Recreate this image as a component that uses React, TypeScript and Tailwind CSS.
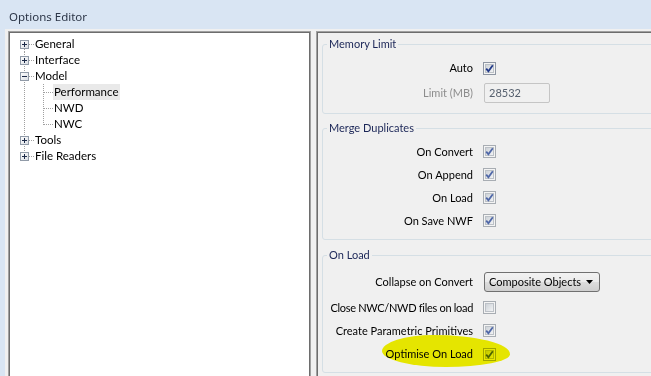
import React from 'react';

type TreeItem = {
  label: string;
  level: 0 | 1;
  box?: 'plus' | 'minus';
  first?: boolean;
  last?: boolean;
  selected?: boolean;
};

const treeItems: TreeItem[] = [
  { label: 'General', level: 0, box: 'plus', first: true },
  { label: 'Interface', level: 0, box: 'plus' },
  { label: 'Model', level: 0, box: 'minus' },
  { label: 'Performance', level: 1, selected: true },
  { label: 'NWD', level: 1 },
  { label: 'NWC', level: 1, last: true },
  { label: 'Tools', level: 0, box: 'plus' },
  { label: 'File Readers', level: 0, box: 'plus', last: true },
];

const DOT = { stroke: '#a0a0a0', strokeWidth: 1, strokeDasharray: '1 1' };

function ExpandBox({ kind }: { kind: 'plus' | 'minus' }) {
  return (
    <g shapeRendering="crispEdges">
      <rect x={10.5} y={4.5} width={8} height={8} fill="url(#boxfill)" stroke="#919ba8" />
      <line x1={12} y1={8.5} x2={17} y2={8.5} stroke="#1c2a48" />
      {kind === 'plus' && <line x1={14.5} y1={6} x2={14.5} y2={11} stroke="#1c2a48" />}
    </g>
  );
}

function TreeRow({ item }: { item: TreeItem }) {
  // connector lines and +/- box, drawn per row
  const gutter =
    item.level === 0 ? (
      <svg width={25} height={16} className="shrink-0">
        <g shapeRendering="crispEdges">
          <line x1={14.5} y1={item.first ? 9 : 0} x2={14.5} y2={item.last ? 8 : 16} {...DOT} />
          <line x1={19} y1={8.5} x2={25} y2={8.5} {...DOT} />
        </g>
        {item.box && <ExpandBox kind={item.box} />}
      </svg>
    ) : (
      <svg width={44} height={16} className="shrink-0">
        <g shapeRendering="crispEdges">
          <line x1={14.5} y1={0} x2={14.5} y2={16} {...DOT} />
          <line x1={33.5} y1={0} x2={33.5} y2={item.last ? 9 : 16} {...DOT} />
          <line x1={34} y1={8.5} x2={44} y2={8.5} {...DOT} />
        </g>
      </svg>
    );

  return (
    <div className="flex items-center h-4">
      {gutter}
      <span
        className={
          item.selected
            ? 'ml-[-1px] pl-px pr-[2px] leading-4 bg-[#e9e9e9] text-black'
            : 'leading-4 text-black'
        }
      >
        {item.label}
      </span>
    </div>
  );
}

function CheckBox({ checked, dark }: { checked: boolean; dark?: boolean }) {
  return (
    <svg width={13} height={13} className="block">
      <defs>
        <linearGradient id="cbin" x1="0" y1="0" x2="1" y2="1">
          <stop offset="0" stopColor="#cbd0d6" />
          <stop offset="1" stopColor="#f4f5f6" />
        </linearGradient>
      </defs>
      <g shapeRendering="crispEdges">
        <rect x={0.5} y={0.5} width={12} height={12} fill="#f4f4f4" stroke={dark ? '#8e96a3' : '#a8adb3'} />
        <rect x={2.5} y={2.5} width={8} height={8} fill="url(#cbin)" stroke="#bcc1c7" />
      </g>
      {checked && (
        <path
          d="M3.2 6.6 L5.4 9.2 L9.8 3.2"
          fill="none"
          stroke={dark ? '#233b8a' : '#5068a8'}
          strokeWidth={1.8}
        />
      )}
    </svg>
  );
}

function Row({
  label,
  children,
  h = 'h-[23px]',
  dim,
  tight,
}: {
  label: string;
  children: React.ReactNode;
  h?: string;
  dim?: boolean;
  tight?: boolean;
}) {
  return (
    <div className={`flex items-center ${h}`}>
      <div
        className={`w-[150px] text-right leading-4 whitespace-nowrap ${dim ? 'text-[#8d8d8d]' : 'text-black'} ${
          tight ? 'tracking-[-0.3px]' : ''
        }`}
      >
        {label}
      </div>
      <div className="ml-[10px] flex items-center">{children}</div>
    </div>
  );
}

function Group({ title, className, children }: { title: string; className?: string; children: React.ReactNode }) {
  return (
    <fieldset className={`w-[420px] border border-[#d5dfe5] rounded-[3px] ${className ?? ''}`}>
      <legend className="ml-[4px] px-[2px] leading-4 text-[#1b2657]">{title}</legend>
      {children}
    </fieldset>
  );
}

export default function App() {
  return (
    <div className="w-[651px] h-[376px] overflow-hidden bg-[#d9e5f3] font-['Lato',sans-serif] text-[11px]">
      {/* title bar */}
      <div className="h-[29px] pl-[9px] pt-[8px] font-['Noto_Sans',sans-serif] text-[11.5px] leading-[18px] text-[#2b3547]">
        Options Editor
      </div>

      <div className="ml-[5px] h-[347px] bg-[#f0f0f0] flex pt-[2px] pl-[3px] gap-[5px]">
        {/* tree */}
        <div className="w-[303px] h-[360px] shrink-0 bg-white border border-[#a0a0a0] shadow-[inset_0_0_0_1px_#6d6d6d] pt-[4px] pl-px text-[11.5px]">
          <svg width={0} height={0} className="absolute">
            <defs>
              <linearGradient id="boxfill" x1="0" y1="0" x2="1" y2="1">
                <stop offset="0" stopColor="#ffffff" />
                <stop offset="1" stopColor="#d9dde3" />
              </linearGradient>
            </defs>
          </svg>
          {treeItems.map((item) => (
            <TreeRow key={item.label} item={item} />
          ))}
        </div>

        {/* settings */}
        <div className="w-[400px] h-[360px] shrink-0 overflow-hidden border-t border-l border-[#a0a0a0] shadow-[inset_1px_1px_0_#6d6d6d] pt-[4px] pl-[5px]">
          <Group title="Memory Limit" className="pt-[6px] pb-[10px]">
            <Row label="Auto" h="h-[20px]">
              <CheckBox checked dark />
            </Row>
            <div className="h-[5px]" />
            <Row label="Limit (MB)" h="h-[20px]" dim>
              <div className="ml-px w-[66px] h-[20px] border border-[#c5c5c5] rounded-[2px] bg-[#f0f0f0] pl-[4px] leading-[18px] text-[#56606e]">
                28532
              </div>
            </Row>
          </Group>

          <Group title="Merge Duplicates" className="mt-[6px] pt-[4px] pb-[7px]">
            <Row label="On Convert"><CheckBox checked /></Row>
            <Row label="On Append"><CheckBox checked /></Row>
            <Row label="On Load"><CheckBox checked /></Row>
            <Row label="On Save NWF"><CheckBox checked /></Row>
          </Group>

          <Group title="On Load" className="mt-[7px] pt-[8px] pb-[6px]">
            <Row label="Collapse on Convert" h="h-[22px]">
              <div className="ml-px w-[116px] h-[20px] border border-[#707070] rounded-[3px] bg-[linear-gradient(#f2f2f2_0%,#ebebeb_50%,#dddddd_50%,#cfcfcf_100%)] flex items-center justify-between pl-[4px] pr-[6px]">
                <span className="leading-4 text-black whitespace-nowrap">Composite Objects</span>
                <svg width={7} height={4}>
                  <polygon points="0,0 7,0 3.5,4" fill="#000" />
                </svg>
              </div>
            </Row>
            <div className="h-[3px]" />
            <Row label="Close NWC/NWD files on load" tight><CheckBox checked={false} /></Row>
            <Row label="Create Parametric Primitives"><CheckBox checked /></Row>
            <div className="relative">
              <Row label="Optimise On Load" h="h-[24px]"><CheckBox checked /></Row>
              {/* highlighter mark */}
              <div className="absolute left-[59px] top-[-7px] w-[128px] h-[32px] bg-[#f4f400] mix-blend-multiply rounded-[40%_60%_50%_50%/50%_60%_40%_50%]" />
            </div>
          </Group>
        </div>
      </div>
    </div>
  );
}
